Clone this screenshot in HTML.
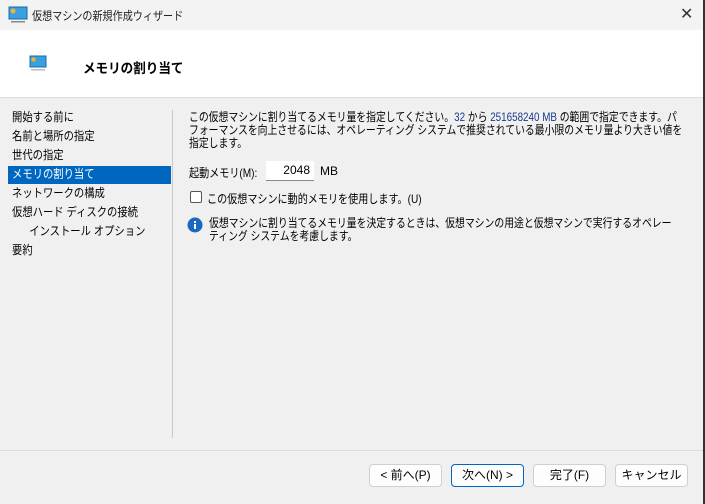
<!DOCTYPE html>
<html><head><meta charset="utf-8"><style>
*{margin:0;padding:0;box-sizing:border-box}
body{width:705px;height:504px;overflow:hidden;background:#f0f0f0;font-family:"Liberation Sans","Noto Sans CJK JP",sans-serif;font-size:12px;color:#000;position:relative}
.a{position:absolute;white-space:nowrap}
.s{transform-origin:0 0;transform:scaleX(0.84)}
.title{left:0;top:0;width:705px;height:30px;background:#f3f3f3}
.hdr{left:0;top:30px;width:705px;height:68px;background:#fff;border-bottom:1px solid #dcdcdc}
.side{left:12px;line-height:19px;transform-origin:0 0;transform:scaleX(0.86)}
.btn{position:absolute;top:464px;height:23px;width:73px;background:#fdfdfd;border:1px solid #d0d0d0;border-radius:4px;text-align:center;line-height:21px;font-size:12px}
.n{color:#1a3a8a}
</style></head><body>
<div class="a title"></div>
<svg class="a" style="left:8px;top:6px" width="20" height="18"><rect x="1" y="1" width="18" height="12" fill="#3aa0e0" stroke="#1a6aa8"/><rect x="3" y="15" width="14" height="1.5" fill="#888"/><circle cx="5" cy="5" r="2.5" fill="#f2b233"/></svg>
<div class="a s" style="left:32px;top:7px;font-size:12px;color:#222">仮想マシンの新規作成ウィザード</div>
<div class="a" style="left:680px;top:4px;font-size:16px;color:#333">✕</div>
<div class="a hdr"></div>
<svg class="a" style="left:29px;top:55px" width="18" height="18"><rect x="1" y="1" width="16" height="11" fill="#3aa0e0" stroke="#1a6aa8"/><rect x="2" y="14" width="14" height="1.5" fill="#bbb"/><circle cx="4.5" cy="4.5" r="2.2" fill="#f2b233"/></svg>
<div class="a" style="left:83px;top:57px;font-size:13.5px;font-weight:bold;transform-origin:0 0;transform:scaleX(0.93)">メモリの割り当て</div>
<div class="a" style="left:8px;top:166px;width:163px;height:18px;background:#0067c0"></div>
<div class="a side" style="top:108px">開始する前に<br>名前と場所の指定<br>世代の指定<br><span style="color:#fff">メモリの割り当て</span><br>ネットワークの構成<br>仮想ハード ディスクの接続<br>&nbsp;&nbsp;&nbsp;&nbsp;&nbsp;&nbsp;インストール オプション<br>要約</div>
<div class="a" style="left:172px;top:110px;width:1px;height:328px;background:#c8c8c8"></div>
<div class="a s" style="left:189px;top:111px;line-height:13px;transform:scaleX(0.82)">この仮想マシンに割り当てるメモリ量を指定してください。<span class="n">32</span> から <span class="n">251658240 MB</span> の範囲で指定できます。パ<br>フォーマンスを向上させるには、オペレーティング システムで推奨されている最小限のメモリ量より大きい値を<br>指定します。</div>
<div class="a s" style="left:189px;top:164px">起動メモリ(M):</div>
<div class="a" style="left:266px;top:161px;width:48px;height:20px;background:#fff;border-bottom:1px solid #888;text-align:right;padding-right:4px;line-height:19px">2048</div>
<div class="a" style="left:320px;top:164px">MB</div>
<div class="a" style="left:190px;top:191px;width:12px;height:12px;border:1px solid #555;border-radius:2px;background:#fff"></div>
<div class="a s" style="left:207px;top:190px">この仮想マシンに動的メモリを使用します。(U)</div>
<svg class="a" style="left:187px;top:217px" width="16" height="16"><circle cx="8" cy="8" r="7.5" fill="#1a68c0"/><rect x="7" y="7" width="2" height="5" fill="#fff"/><rect x="7" y="4" width="2" height="2" fill="#fff"/></svg>
<div class="a s" style="left:209px;top:217px;line-height:13px;transform:scaleX(0.82)">仮想マシンに割り当てるメモリ量を決定するときは、仮想マシンの用途と仮想マシンで実行するオペレー<br>ティング システムを考慮します。</div>
<div class="a" style="left:0;top:450px;width:705px;height:1px;background:#dcdcdc"></div>
<div class="btn" style="left:369px">&lt; 前へ(P)</div>
<div class="btn" style="left:451px;border:1px solid #0067c0">次へ(N) &gt;</div>
<div class="btn" style="left:533px">完了(F)</div>
<div class="btn" style="left:615px">キャンセル</div>
<div class="a" style="left:703px;top:0;width:2px;height:504px;background:#333"></div>
</body></html>
